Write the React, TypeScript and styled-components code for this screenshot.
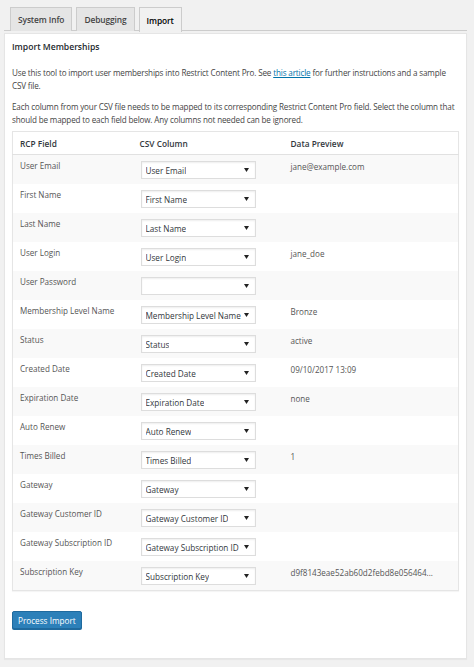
import styled, { createGlobalStyle } from "styled-components";

const GlobalStyle = createGlobalStyle`
  html, body {
    margin: 0;
    padding: 0;
    background: #f1f1f1;
  }
  body {
    font-family: "Open Sans", "Noto Sans", sans-serif;
    font-size: 8.1px;
    color: #444;
  }
`;

type Row = { field: string; column: string; preview?: string };

const rows: Row[] = [
  { field: "User Email", column: "User Email", preview: "jane@example.com" },
  { field: "First Name", column: "First Name" },
  { field: "Last Name", column: "Last Name" },
  { field: "User Login", column: "User Login", preview: "jane_doe" },
  { field: "User Password", column: "" },
  { field: "Membership Level Name", column: "Membership Level Name", preview: "Bronze" },
  { field: "Status", column: "Status", preview: "active" },
  { field: "Created Date", column: "Created Date", preview: "09/10/2017 13:09" },
  { field: "Expiration Date", column: "Expiration Date", preview: "none" },
  { field: "Auto Renew", column: "Auto Renew" },
  { field: "Times Billed", column: "Times Billed", preview: "1" },
  { field: "Gateway", column: "Gateway" },
  { field: "Gateway Customer ID", column: "Gateway Customer ID" },
  { field: "Gateway Subscription ID", column: "Gateway Subscription ID" },
  {
    field: "Subscription Key",
    column: "Subscription Key",
    preview: "d9f8143eae52ab60d2febd8e056464...",
  },
];

const Arrow = () => (
  <svg width="5" height="4" viewBox="0 0 5 4">
    <path d="M0 0h5L2.5 4z" fill="#222" />
  </svg>
);

export default function App() {
  return (
    <>
      <GlobalStyle />
      <Page>
        <TabBar>
          <Tab>System Info</Tab>
          <Tab>Debugging</Tab>
          <Tab $active>Import</Tab>
        </TabBar>
        <Panel>
          <Title>Import Memberships</Title>
          <Intro>
            <Text>
              Use this tool to import user memberships into Restrict Content Pro. See{" "}
              <Link href="#">this article</Link> for further instructions and a sample
              CSV file.
            </Text>
            <Text>
              Each column from your CSV file needs to be mapped to its corresponding
              Restrict Content Pro field. Select the column that should be mapped to
              each field below. Any columns not needed can be ignored.
            </Text>
          </Intro>
          <Table>
            <colgroup>
              <col style={{ width: 120 }} />
              <col style={{ width: 151 }} />
              <col />
            </colgroup>
            <thead>
              <tr>
                <HeadCell>RCP Field</HeadCell>
                <HeadCell>CSV Column</HeadCell>
                <HeadCell>Data Preview</HeadCell>
              </tr>
            </thead>
            <tbody>
              {rows.map((r, i) => (
                <BodyRow key={r.field} $striped={i % 2 === 0}>
                  <FieldCell>{r.field}</FieldCell>
                  <SelectCell>
                    <Select>
                      <SelectText>{r.column}</SelectText>
                      <Arrow />
                    </Select>
                  </SelectCell>
                  <PreviewCell>{r.preview}</PreviewCell>
                </BodyRow>
              ))}
            </tbody>
          </Table>
          <Button>Process Import</Button>
        </Panel>
      </Page>
    </>
  );
}

const Page = styled.div`
  padding: 7px 7px 9px 4px;
`;

const TabBar = styled.div`
  display: flex;
  gap: 4px;
  padding-left: 6px;
  height: 23px;
  border-bottom: 1px solid #ccc;
`;

const Tab = styled.div<{ $active?: boolean }>`
  display: flex;
  align-items: center;
  padding: 0 7px;
  border: 1px solid #ccc;
  border-bottom: none;
  background: ${({ $active }) => ($active ? "#f1f1f1" : "#e5e5e5")};
  color: ${({ $active }) => ($active ? "#000" : "#444")};
  font-weight: 600;
  font-size: 8.4px;
  letter-spacing: -0.1px;
  margin-bottom: ${({ $active }) => ($active ? "-1px" : "0")};
  height: ${({ $active }) => ($active ? "24px" : "23px")};
`;

const Panel = styled.div`
  margin-top: 2px;
  background: #fff;
  border: 1px solid #e5e5e5;
  box-shadow: 0 1px 1px rgba(0, 0, 0, 0.04);
  padding: 7px 7px 29px 7px;
`;

const Title = styled.h2`
  margin: 0 0 12px;
  font-size: 8.6px;
  font-weight: 600;
  color: #23282d;
  line-height: 13px;
`;

const Intro = styled.div`
  display: flex;
  flex-direction: column;
  gap: 8px;
  margin-bottom: 5px;
`;

const Text = styled.p`
  margin: 0;
  line-height: 13px;
  letter-spacing: -0.15px;
`;

const Link = styled.a`
  color: #0073aa;
  text-decoration: underline;
`;

const Table = styled.table`
  width: 100%;
  border-collapse: collapse;
  table-layout: fixed;
  border: 1px solid #e5e5e5;
  box-shadow: 0 1px 1px rgba(0, 0, 0, 0.04);
`;

const HeadCell = styled.th`
  text-align: left;
  font-weight: 600;
  color: #32373c;
  padding: 0 7px;
  height: 22px;
  border-bottom: 1px solid #e1e1e1;
  font-size: 8.3px;
`;

const BodyRow = styled.tr<{ $striped: boolean }>`
  background: ${({ $striped }) => ($striped ? "#f9f9f9" : "#fff")};
`;

const FieldCell = styled.td`
  vertical-align: top;
  padding: 4px 7px 0;
  height: 25px;
  line-height: 13px;
  color: #555;
`;

const SelectCell = styled.td`
  vertical-align: top;
  padding: 6px 7px 0 8px;
`;

const PreviewCell = styled.td`
  vertical-align: top;
  padding: 5px 7px 0;
  line-height: 13px;
  color: #555;
  white-space: nowrap;
  overflow: hidden;
`;

const Select = styled.div`
  display: flex;
  align-items: center;
  justify-content: space-between;
  gap: 2px;
  box-sizing: border-box;
  width: 115px;
  height: 18px;
  padding: 0 6px 0 4px;
  background: #fff;
  border: 1px solid #ddd;
  box-shadow: inset 0 1px 2px rgba(0, 0, 0, 0.07);
  color: #32373c;
  font-size: 8.2px;

  svg {
    flex: none;
  }
`;

const SelectText = styled.span`
  white-space: nowrap;
  overflow: hidden;
`;

const Button = styled.button`
  display: block;
  margin-top: 20px;
  height: 18px;
  padding: 0 5px;
  font-family: inherit;
  font-size: 8.2px;
  color: #fff;
  background: #2c80b9;
  border: 1px solid #1f6a9e;
  border-radius: 2px;
  box-shadow: 0 1px 0 #1f6a9e;
  cursor: pointer;
`;
